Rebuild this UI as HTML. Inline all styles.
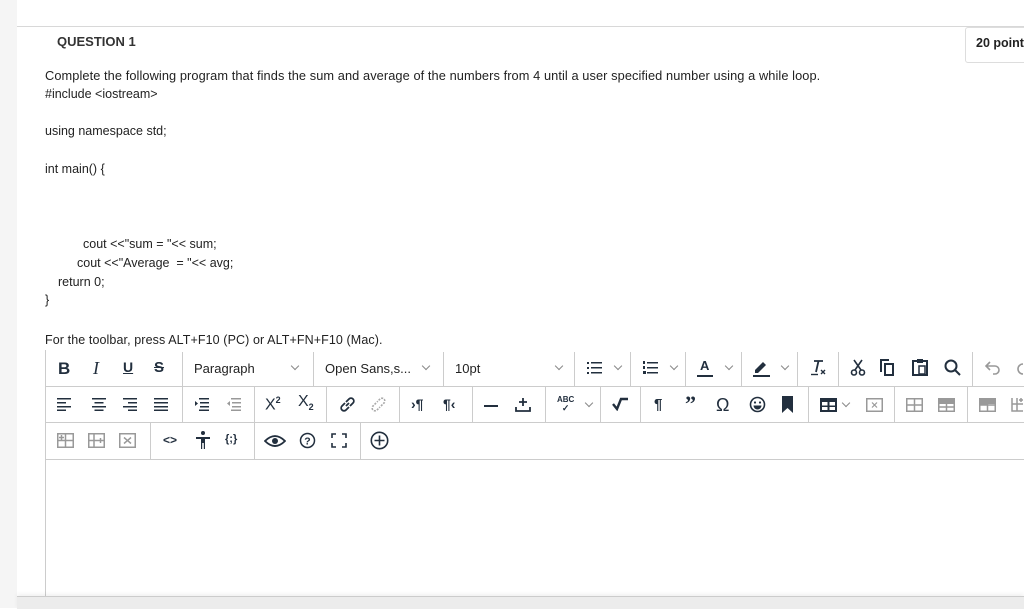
<!DOCTYPE html>
<html><head><meta charset="utf-8"><style>
body{margin:0;width:1024px;height:608px;overflow:hidden;background:#fff;position:relative;font-family:"Liberation Sans",sans-serif;color:#222}
.a{position:absolute;white-space:pre}
.t{font-size:12.5px;color:#222}
.ic{position:absolute;color:#222f3e;font-size:14px;line-height:1;text-align:center}
.sep{position:absolute;width:1px;background:#ccc}
.chev{position:absolute;width:5px;height:5px;border-right:1px solid #888;border-bottom:1px solid #888;transform:rotate(45deg)}
svg{position:absolute}
</style></head><body>
<div class="a" style="left:0;top:0;width:17px;height:608px;background:#f5f5f5"></div>
<div class="a" style="left:17px;top:26px;width:1007px;height:1px;background:#d8d8d8"></div>
<div class="a" style="left:57px;top:34px;font-size:13px;font-weight:bold;color:#333">QUESTION 1</div>
<div class="a" style="left:965px;top:27px;width:70px;height:36px;border:1px solid #ddd;border-radius:3px;box-sizing:border-box"></div>
<div class="a" style="left:976px;top:36px;font-size:12.5px;font-weight:bold;color:#222">20 points</div>

<div class="a" style="left:45px;top:68px;font-size:12.8px;letter-spacing:0.08px">Complete the following program that finds the sum and average of the numbers from 4 until a user specified number using a while loop.</div>
<div class="a t" style="left:45px;top:87px">#include &lt;iostream&gt;</div>
<div class="a t" style="left:45px;top:124px">using namespace std;</div>
<div class="a t" style="left:45px;top:162px">int main() {</div>
<div class="a t" style="left:83px;top:237px">cout &lt;&lt;"sum = "&lt;&lt; sum;</div>
<div class="a t" style="left:77px;top:256px">cout &lt;&lt;"Average  = "&lt;&lt; avg;</div>
<div class="a t" style="left:58px;top:275px">return 0;</div>
<div class="a t" style="left:45px;top:293px">}</div>
<div class="a t" style="left:45px;top:333px;letter-spacing:0.1px">For the toolbar, press ALT+F10 (PC) or ALT+FN+F10 (Mac).</div>

<div class="a" style="left:45px;top:350px;width:1px;height:246px;background:#ccc"></div>
<div class="a" style="left:45px;top:386px;width:979px;height:1px;background:#ccc"></div>
<div class="a" style="left:45px;top:422px;width:979px;height:1px;background:#ccc"></div>
<div class="a" style="left:45px;top:459px;width:979px;height:1px;background:#ccc"></div>
<div class="a" style="left:17px;top:596px;width:1007px;height:12px;background:#ececec;border-top:1px solid #ccc;box-shadow:0 -2px 4px rgba(0,0,0,.06)"></div>

<!-- row1 -->
<div class="ic" style="left:58px;top:360px;font-size:17px;font-weight:bold">B</div>
<div class="ic" style="left:93px;top:359px;font-size:18px;font-style:italic;font-family:'Liberation Serif',serif">I</div>
<div class="ic" style="left:123px;top:360px;font-size:14px;font-weight:bold;text-decoration:underline">U</div>
<div class="ic" style="left:154px;top:360px;font-size:15px;font-weight:bold;text-decoration:line-through">S</div>
<div class="sep" style="left:182px;top:352px;height:34px"></div>
<div class="a t" style="left:194px;top:361px;font-size:13px">Paragraph</div><div class="chev" style="left:292px;top:363px"></div>
<div class="sep" style="left:313px;top:352px;height:34px"></div>
<div class="a t" style="left:325px;top:361px;font-size:13px">Open Sans,s...</div><div class="chev" style="left:423px;top:363px"></div>
<div class="sep" style="left:443px;top:352px;height:34px"></div>
<div class="a t" style="left:455px;top:361px;font-size:13px">10pt</div><div class="chev" style="left:556px;top:363px"></div>
<div class="sep" style="left:574px;top:352px;height:34px"></div>
<svg style="left:587px;top:361px" width="16" height="14"><g fill="#222f3e"><rect x="0" y="1" width="2" height="2"/><rect x="0" y="6" width="2" height="2"/><rect x="0" y="11" width="2" height="2"/><rect x="4" y="1" width="11" height="1.5"/><rect x="4" y="6" width="11" height="1.5"/><rect x="4" y="11" width="11" height="1.5"/></g></svg>
<div class="chev" style="left:615px;top:363px"></div>
<div class="sep" style="left:630px;top:352px;height:34px"></div>
<svg style="left:643px;top:361px" width="16" height="14"><g fill="#222f3e"><rect x="0" y="0" width="2" height="3"/><rect x="0" y="5" width="2" height="3"/><rect x="0" y="10" width="3" height="3"/><rect x="4" y="1" width="11" height="1.5"/><rect x="4" y="6" width="11" height="1.5"/><rect x="4" y="11" width="11" height="1.5"/></g></svg>
<div class="chev" style="left:671px;top:363px"></div>
<div class="sep" style="left:685px;top:352px;height:34px"></div>
<div class="ic" style="left:700px;top:359px;font-size:13px;font-weight:bold">A</div><div class="a" style="left:697px;top:375px;width:16px;height:2px;background:#222f3e"></div>
<div class="chev" style="left:726px;top:363px"></div>
<div class="sep" style="left:741px;top:352px;height:34px"></div>
<svg style="left:753px;top:360px" width="18" height="17"><path d="M2 10 L10 2 L13 5 L5 13 L2 13Z" fill="#222f3e"/><rect x="0" y="15" width="17" height="2" fill="#222f3e"/></svg>
<div class="chev" style="left:782px;top:363px"></div>
<div class="sep" style="left:797px;top:352px;height:34px"></div>
<svg style="left:809px;top:359px" width="18" height="17"><path d="M5 2H14M9.5 2L7 13" stroke="#222f3e" stroke-width="1.8" fill="none"/><path d="M2 15.5H9" stroke="#222f3e" stroke-width="1.4"/><path d="M12 11L16 15M16 11L12 15" stroke="#222f3e" stroke-width="1.4"/></svg>
<div class="sep" style="left:838px;top:352px;height:34px"></div>
<svg style="left:850px;top:359px" width="16" height="17"><path d="M4 1L11 11M12 1L5 11" stroke="#222f3e" stroke-width="1.6"/><circle cx="4" cy="13.5" r="2.5" fill="none" stroke="#222f3e" stroke-width="1.6"/><circle cx="12" cy="13.5" r="2.5" fill="none" stroke="#222f3e" stroke-width="1.6"/></svg>
<svg style="left:880px;top:359px" width="14" height="17"><path d="M1 13V1H9" fill="none" stroke="#222f3e" stroke-width="2"/><rect x="5" y="5" width="8" height="11" fill="none" stroke="#222f3e" stroke-width="2"/></svg>
<svg style="left:912px;top:358px" width="16" height="18"><rect x="1" y="3" width="14" height="14" fill="none" stroke="#222f3e" stroke-width="2"/><rect x="5" y="1" width="6" height="4" fill="#222f3e"/><rect x="7" y="8" width="6" height="8" fill="none" stroke="#222f3e" stroke-width="1.5"/></svg>
<svg style="left:944px;top:359px" width="18" height="18"><circle cx="7" cy="7" r="5.5" fill="none" stroke="#222f3e" stroke-width="2"/><path d="M11 11L16 16" stroke="#222f3e" stroke-width="2"/></svg>
<div class="sep" style="left:972px;top:352px;height:34px"></div>
<svg style="left:985px;top:361px" width="16" height="14"><path d="M5 1L1 5L5 9M1 5H10A4 4 0 0 1 10 13H8" fill="none" stroke="#999" stroke-width="1.6"/></svg>
<svg style="left:1017px;top:361px" width="10" height="14"><path d="M6 3A5 5 0 0 0 6 13" fill="none" stroke="#999" stroke-width="1.6"/></svg>

<!-- row2 -->
<svg style="left:57px;top:398px" width="15" height="13"><g fill="#222f3e"><rect y="0" width="14" height="1.5"/><rect y="4" width="9" height="1.5"/><rect y="8" width="14" height="1.5"/><rect y="11.5" width="9" height="1.5"/></g></svg>
<svg style="left:92px;top:398px" width="15" height="13"><g fill="#222f3e"><rect y="0" width="14" height="1.5"/><rect x="2.5" y="4" width="9" height="1.5"/><rect y="8" width="14" height="1.5"/><rect x="2.5" y="11.5" width="9" height="1.5"/></g></svg>
<svg style="left:123px;top:398px" width="15" height="13"><g fill="#222f3e"><rect y="0" width="14" height="1.5"/><rect x="5" y="4" width="9" height="1.5"/><rect y="8" width="14" height="1.5"/><rect x="5" y="11.5" width="9" height="1.5"/></g></svg>
<svg style="left:154px;top:398px" width="15" height="13"><g fill="#222f3e"><rect y="0" width="14" height="1.5"/><rect y="4" width="14" height="1.5"/><rect y="8" width="14" height="1.5"/><rect y="11.5" width="14" height="1.5"/></g></svg>
<div class="sep" style="left:182px;top:387px;height:35px"></div>
<svg style="left:195px;top:398px" width="15" height="13"><g fill="#222f3e"><path d="M0 3L3 5.5L0 8Z"/><rect x="4" y="0" width="10" height="1.5"/><rect x="5" y="4" width="9" height="1.5"/><rect x="5" y="8" width="9" height="1.5"/><rect x="4" y="11.5" width="10" height="1.5"/></g></svg>
<svg style="left:227px;top:398px" width="15" height="13"><g fill="#999"><path d="M3 3L0 5.5L3 8Z"/><rect x="4" y="0" width="10" height="1.5"/><rect x="5" y="4" width="9" height="1.5"/><rect x="5" y="8" width="9" height="1.5"/><rect x="4" y="11.5" width="10" height="1.5"/></g></svg>
<div class="sep" style="left:254px;top:387px;height:35px"></div>
<div class="ic" style="left:265px;top:396px;font-size:16px">X<sup style="font-size:9px;font-weight:bold">2</sup></div>
<div class="ic" style="left:298px;top:394px;font-size:16px">X<sub style="font-size:9px;font-weight:bold">2</sub></div>
<div class="sep" style="left:326px;top:387px;height:35px"></div>
<svg style="left:339px;top:396px" width="17" height="17"><path d="M7 10L10 7M6 7L3 10A2.5 2.5 0 0 0 7 14L10 11M11 10L14 7A2.5 2.5 0 0 0 10 3L7 6" fill="none" stroke="#222f3e" stroke-width="1.8"/></svg>
<svg style="left:370px;top:396px" width="17" height="17"><path d="M6 7L3 10A2.5 2.5 0 0 0 7 14L10 11M11 10L14 7A2.5 2.5 0 0 0 10 3L7 6" fill="none" stroke="#aaa" stroke-width="1.6" stroke-dasharray="2 1.2"/></svg>
<div class="sep" style="left:399px;top:387px;height:35px"></div>
<div class="ic" style="left:411px;top:397px;font-size:14px;font-weight:bold">›¶</div>
<div class="ic" style="left:443px;top:397px;font-size:14px;font-weight:bold">¶‹</div>
<div class="sep" style="left:472px;top:387px;height:35px"></div>
<div class="a" style="left:484px;top:405px;width:14px;height:2px;background:#222f3e"></div>
<svg style="left:515px;top:397px" width="16" height="15"><path d="M8 1V9M4 5H12M1 10V14H15V10" fill="none" stroke="#222f3e" stroke-width="1.8"/></svg>
<div class="sep" style="left:545px;top:387px;height:35px"></div>
<div class="ic" style="left:557px;top:396px;font-size:8px;font-weight:bold">ABC<br><span style="font-size:9px">✓</span></div>
<div class="chev" style="left:586px;top:400px"></div>
<div class="sep" style="left:600px;top:387px;height:35px"></div>
<svg style="left:612px;top:397px" width="17" height="14"><path d="M1 7L5 12L9 2H16" fill="none" stroke="#222f3e" stroke-width="2.4"/></svg>
<div class="sep" style="left:640px;top:387px;height:35px"></div>
<div class="ic" style="left:654px;top:397px;font-size:15px;font-weight:bold">¶</div>
<div class="ic" style="left:685px;top:393px;font-size:22px;font-weight:bold;font-family:'Liberation Serif',serif">”</div>
<div class="ic" style="left:716px;top:396px;font-size:18px">Ω</div>
<svg style="left:749px;top:396px" width="17" height="17"><circle cx="8.5" cy="8.5" r="7" fill="none" stroke="#222f3e" stroke-width="1.6"/><circle cx="6" cy="6.5" r="1.1" fill="#222f3e"/><circle cx="11" cy="6.5" r="1.1" fill="#222f3e"/><path d="M4.5 9.5H12.5A4 4 0 0 1 4.5 9.5Z" fill="#222f3e"/></svg>
<svg style="left:781px;top:396px" width="13" height="17"><path d="M1 0H12V17L6.5 12L1 17Z" fill="#222f3e"/></svg>
<div class="sep" style="left:808px;top:387px;height:35px"></div>
<svg style="left:820px;top:398px" width="17" height="14"><rect x="0" y="0" width="17" height="14" fill="#222f3e"/><rect x="2" y="4" width="5.5" height="3.5" fill="#fff"/><rect x="9.5" y="4" width="5.5" height="3.5" fill="#fff"/><rect x="2" y="9" width="5.5" height="3" fill="#fff"/><rect x="9.5" y="9" width="5.5" height="3" fill="#fff"/></svg>
<div class="chev" style="left:843px;top:400px"></div>
<svg style="left:866px;top:398px" width="17" height="14"><rect x="0.75" y="0.75" width="15.5" height="12.5" fill="none" stroke="#999" stroke-width="1.5"/><path d="M6 4.5L11 9.5M11 4.5L6 9.5" stroke="#999" stroke-width="1.2"/></svg>
<div class="sep" style="left:894px;top:387px;height:35px"></div>
<svg style="left:906px;top:398px" width="17" height="14"><rect x="0.75" y="0.75" width="15.5" height="12.5" fill="none" stroke="#999" stroke-width="1.5"/><path d="M8.5 1V13M1 7H16" stroke="#999" stroke-width="1.5"/></svg>
<svg style="left:938px;top:398px" width="17" height="14"><rect x="0.75" y="0.75" width="15.5" height="12.5" fill="none" stroke="#999" stroke-width="1.5"/><rect x="0" y="0" width="17" height="6" fill="#999"/><path d="M8.5 6V13M1 9H16" stroke="#999" stroke-width="1.5"/></svg>
<div class="sep" style="left:967px;top:387px;height:35px"></div>
<svg style="left:979px;top:398px" width="17" height="14"><rect x="0.75" y="0.75" width="15.5" height="12.5" fill="none" stroke="#999" stroke-width="1.5"/><rect x="0" y="0" width="8.5" height="7" fill="#999"/><rect x="8.5" y="0" width="8.5" height="6" fill="#999"/><path d="M8.5 1V13M1 7H16" stroke="#999" stroke-width="1.5"/></svg>
<svg style="left:1011px;top:397px" width="13" height="15"><path d="M1 1V14H12M1 7H12M6 1V14M8 3H12M10 1V5" fill="none" stroke="#999" stroke-width="1.5"/></svg>

<!-- row3 -->
<svg style="left:57px;top:433px" width="17" height="15"><rect x="0.75" y="0.75" width="15.5" height="13.5" fill="none" stroke="#999" stroke-width="1.5"/><path d="M8.5 1V14M1 7.5H16M2 4.5H7M4.5 2V7" stroke="#999" stroke-width="1.5"/></svg>
<svg style="left:88px;top:433px" width="17" height="15"><rect x="0.75" y="0.75" width="15.5" height="13.5" fill="none" stroke="#999" stroke-width="1.5"/><path d="M6 1V14M1 7.5H16M10 7.5H15M12.5 5V10" stroke="#999" stroke-width="1.5"/></svg>
<svg style="left:119px;top:433px" width="17" height="15"><rect x="0.75" y="0.75" width="15.5" height="13.5" fill="none" stroke="#999" stroke-width="1.5"/><path d="M5 4.5L12 10.5M12 4.5L5 10.5" stroke="#999" stroke-width="1.5"/></svg>
<div class="sep" style="left:150px;top:423px;height:36px"></div>
<div class="ic" style="left:163px;top:434px;font-size:12px;font-weight:bold">&lt;&gt;</div>
<svg style="left:195px;top:431px" width="16" height="18"><circle cx="8" cy="2" r="2" fill="#222f3e"/><path d="M1 6H15V8H10V18H8.8V12H7.2V18H6V8H1Z" fill="#222f3e"/></svg>
<div class="ic" style="left:225px;top:434px;font-size:11px;font-weight:bold">{;}</div>
<div class="sep" style="left:254px;top:423px;height:36px"></div>
<svg style="left:264px;top:434px" width="22" height="14"><path d="M1 7Q11 -3 21 7Q11 17 1 7Z" fill="none" stroke="#222f3e" stroke-width="1.8"/><circle cx="11" cy="7" r="3" fill="#222f3e"/></svg>
<svg style="left:299px;top:432px" width="17" height="17"><circle cx="8.5" cy="8.5" r="7" fill="none" stroke="#222f3e" stroke-width="1.5"/><text x="8.5" y="12.5" font-size="10.5" font-weight="bold" text-anchor="middle" fill="#222f3e" font-family="Liberation Sans">?</text></svg>
<svg style="left:331px;top:433px" width="16" height="15"><path d="M1 5V1H5M11 1H15V5M15 10V14H11M5 14H1V10" fill="none" stroke="#222f3e" stroke-width="1.6"/></svg>
<div class="sep" style="left:360px;top:423px;height:36px"></div>
<svg style="left:370px;top:431px" width="19" height="19"><circle cx="9.5" cy="9.5" r="8.2" fill="none" stroke="#222f3e" stroke-width="1.6"/><path d="M9.5 4.5V14.5M4.5 9.5H14.5" stroke="#222f3e" stroke-width="1.6"/></svg>
</body></html>
